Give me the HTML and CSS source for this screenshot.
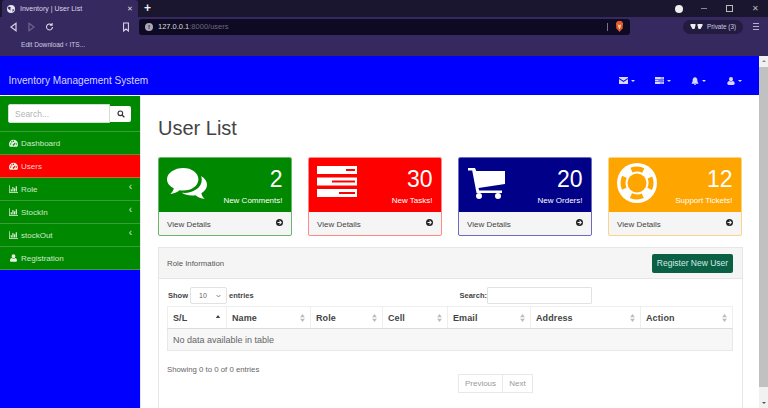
FILE: index.html
```html
<!DOCTYPE html>
<html lang="en">
<head>
<meta charset="utf-8">
<title>Inventory | User List</title>
<link rel="stylesheet" href="styles.css">
</head>
<body>
<svg class="defs" width="0" height="0" aria-hidden="true">
  <symbol id="i-dash" viewBox="0 0 16 14"><path d="M8 1a8 8 0 0 0-8 8c0 1.700.5 3.200 1.400 4.500h13.200A8 8 0 0 0 16 9a8 8 0 0 0-8-8zM3 10a1.200 1.200 0 1 1 0-2.400A1.200 1.200 0 0 1 3 10zm1.800-3.800a1.200 1.200 0 1 1 0-2.400 1.200 1.200 0 0 1 0 2.400zM8 5a1.200 1.200 0 1 1 0-2.400A1.200 1.200 0 0 1 8 5zm1 6.500a1.500 1.500 0 0 1-2.300-1.800L11 6.300l.5.500zM13 10a1.200 1.200 0 1 1 0-2.400 1.200 1.200 0 0 1 0 2.400z"/></symbol>
  <symbol id="i-bars" viewBox="0 0 16 13"><path d="M0 0h1.200v11.800H16V13H0zM3 7h2v4H3zM6 3h2v8H6zM9 5h2v6H9zM12 1.500h2V11h-2z"/></symbol>
  <symbol id="i-user" viewBox="0 0 12 13"><path d="M6 0a3.300 3.300 0 0 1 3.200 3.600C9.200 5.500 7.800 7 6 7S2.800 5.500 2.800 3.600A3.300 3.300 0 0 1 6 0zM3.200 6.500C4 7.300 5 7.700 6 7.700s2-.4 2.800-1.200c1.800.2 3.200 1.600 3.200 4.200 0 1.400-1 2.300-2.200 2.300H2.200C1 13 0 12.100 0 10.700 0 8.100 1.400 6.700 3.200 6.500z"/></symbol>
  <symbol id="i-arrow" viewBox="0 0 14 14"><path fill-rule="evenodd" d="M7 0a7 7 0 1 1 0 14A7 7 0 0 1 7 0zm.6 2.700L6.300 4 8.200 5.800H3v2.400h5.200L6.300 10l1.300 1.300L11.900 7z"/></symbol>
  <symbol id="i-sort" viewBox="0 0 6 10"><path d="M3 0l3 4H0zM3 10L0 6h6z"/></symbol>
</svg>

<header class="browser">
  <div class="tabstrip">
    <div class="tab">
      <svg class="tab-globe" viewBox="0 0 10 10"><circle cx="5" cy="5" r="5" fill="#e8e6f0"/><path d="M2 2l3 1-1 2 1 2-2-1-2-2zM7 5l2 1-2 3z" fill="#3a2d66"/></svg>
      <span class="tab-title">Inventory | User List</span>
      <span class="tab-close">✕</span>
    </div>
    <span class="tab-new">+</span>
    <div class="window-controls">
      <span class="wc-dot"></span>
      <span class="wc-min"></span>
      <span class="wc-max"></span>
      <span class="wc-x">✕</span>
    </div>
  </div>
  <div class="toolbar">
    <svg class="tb-icon" viewBox="0 0 10 12"><path d="M8 1.500v9L2 6z" fill="none" stroke="#cfcbe0" stroke-width="1.500"/></svg>
    <svg class="tb-icon tb-off" viewBox="0 0 10 12"><path d="M2 1.500v9L8 6z" fill="none" stroke="#6b6290" stroke-width="1.500"/></svg>
    <svg class="tb-icon" viewBox="0 0 12 12"><path d="M10 6a4 4 0 1 1-1.300-3M9.500 .5V3.500H6.500" fill="none" stroke="#dedbea" stroke-width="1.400"/></svg>
    <svg class="tb-book" viewBox="0 0 10 12"><path d="M2 1h6v10L5 8.500 2 11z" fill="none" stroke="#dedbea" stroke-width="1.300"/></svg>
    <div class="addressbar">
      <span class="info-dot">!</span>
      <span class="url-host">127.0.0.1</span><span class="url-rest">:8000/users</span>
      <span class="addr-sep"></span>
      <svg class="brave" viewBox="0 0 10 12"><path d="M1 2l2-2h4l2 2-.5 6L5 12 1.500 8z" fill="#e0592a"/><path d="M3 3.500l2 1 2-1-1 4-1 1.500-1-1.500z" fill="#f6c9a8"/></svg>
    </div>
    <div class="private">
      <svg class="glasses" viewBox="0 0 12 5"><path d="M0 0h5v1.500L4 5H2L0 1.500zM7 0h5v1.500L10 5H8L7 1.500z" fill="#eee"/></svg>
      <span>Private (3)</span>
    </div>
    <span class="hamburger"><i></i><i></i><i></i></span>
  </div>
  <div class="bookmarks"><span>Edit Download ‹ ITS...</span></div>
</header>

<div class="viewport">
  <div class="page">
    <nav class="navbar">
      <span class="brand">Inventory Management System</span>
      <div class="nav-icons">
        <span class="nav-item"><svg class="ni" viewBox="0 0 13 10"><path d="M0 0h13v1.500L6.500 5.500 0 1.500zM0 3l6.500 4L13 3v7H0z"/></svg><b class="caret"></b></span>
        <span class="nav-item"><svg class="ni" viewBox="0 0 13 10"><path fill-rule="evenodd" d="M0 0h13v2.800H0zM8 .9v1h4v-1zM0 3.600h13v2.800H0zM5 4.500v1h7v-1zM0 7.200h13V10H0zM7 8.100v1h5v-1z"/></svg><b class="caret"></b></span>
        <span class="nav-item"><svg class="ni ni-bell" viewBox="0 0 10 12"><path d="M5 0c.5 0 .8.300.8.800C7.700 1.200 8.500 2.700 8.500 4.500c0 2.500.5 3.500 1.500 4.500v1H0V9c1-1 1.500-2 1.500-4.500C1.500 2.700 2.300 1.200 4.200.8 4.200.3 4.500 0 5 0zM3.700 10.500h2.600C6.300 11.400 5.700 12 5 12s-1.300-.6-1.300-1.500z"/></svg><b class="caret"></b></span>
        <span class="nav-item"><svg class="ni ni-bell"><use href="#i-user"/></svg><b class="caret"></b></span>
      </div>
    </nav>

    <div class="layout">
      <aside class="sidebar">
        <div class="side-search">
          <input class="side-input" type="text" placeholder="Search...">
          <button class="side-btn" type="button"><svg viewBox="0 0 12 12" class="mag"><circle cx="5" cy="5" r="3.500" fill="none" stroke="#333" stroke-width="1.700"/><path d="M7.500 7.500l3.500 3.500" stroke="#333" stroke-width="2"/></svg></button>
        </div>
        <ul class="menu">
          <li class="menu-item"><svg class="mi"><use href="#i-dash"/></svg>Dashboard</li>
          <li class="menu-item active"><svg class="mi"><use href="#i-dash"/></svg>Users</li>
          <li class="menu-item"><svg class="mi"><use href="#i-bars"/></svg>Role<span class="chev">‹</span></li>
          <li class="menu-item"><svg class="mi"><use href="#i-bars"/></svg>StockIn<span class="chev">‹</span></li>
          <li class="menu-item"><svg class="mi"><use href="#i-bars"/></svg>stockOut<span class="chev">‹</span></li>
          <li class="menu-item"><svg class="mi mi-user"><use href="#i-user"/></svg>Registration</li>
        </ul>
      </aside>

      <main class="content">
        <h1 class="page-title">User List</h1>

        <section class="cards">
          <article class="card card-green">
            <div class="card-top">
              <svg class="card-icon icon-comments" viewBox="0 0 42 34" preserveAspectRatio="none"><path d="M17 0c9 0 16 5.200 16 12s-7 12-16 12c-1.300 0-2.600-.1-3.800-.3C10.500 26 7.300 27.200 3.500 27.500c1.700-1.500 3.200-3.500 3.600-6C2.700 19.400 0 16 0 12 0 5.200 8 0 17 0z"/><path d="M35.300 8.500C39.200 10.400 42 13.800 42 17.800c0 3.700-2.300 6.900-5.900 8.900.4 2.500 1.800 4.400 3.500 6-3.700-.4-7-1.600-9.600-3.800-1.300.2-2.600.3-3.900.3-4 0-7.700-1-10.500-2.800 1 .1 1.900.1 2.400.1 9.800 0 18.500-5.600 18.500-14 0-1.400-.3-2.800-.9-4z"/></svg>
              <div class="card-stat"><div class="card-num">2</div><div class="card-label">New Comments!</div></div>
            </div>
            <div class="card-foot"><span>View Details</span><svg class="foot-arrow"><use href="#i-arrow"/></svg></div>
          </article>
          <article class="card card-red">
            <div class="card-top">
              <svg class="card-icon icon-tasks" viewBox="0 0 40 31" fill-rule="evenodd"><path d="M0 0h40v8H0zM29 3v2h9V3zM0 11.500h40v8H0zM15 14.500v2h23v-2zM0 23h40v8H0zM22 26v2h16v-2z"/></svg>
              <div class="card-stat"><div class="card-num">30</div><div class="card-label">New Tasks!</div></div>
            </div>
            <div class="card-foot"><span>View Details</span><svg class="foot-arrow"><use href="#i-arrow"/></svg></div>
          </article>
          <article class="card card-navy">
            <div class="card-top">
              <svg class="card-icon icon-cart" viewBox="0 0 37 31"><path d="M0 0h7l1.300 3H37v13L10.500 20l.7 2.500H34V25H8.500L4.200 2.500H0z"/><circle cx="11" cy="28" r="3"/><circle cx="30" cy="28" r="3"/></svg>
              <div class="card-stat"><div class="card-num">20</div><div class="card-label">New Orders!</div></div>
            </div>
            <div class="card-foot"><span>View Details</span><svg class="foot-arrow"><use href="#i-arrow"/></svg></div>
          </article>
          <article class="card card-orange">
            <div class="card-top">
              <svg class="card-icon icon-ring" viewBox="0 0 40 40"><circle cx="20" cy="20" r="20"/><circle class="ring-cut" cx="20" cy="20" r="9.500"/><circle class="ring-slots" cx="20" cy="20" r="14"/></svg>
              <div class="card-stat"><div class="card-num">12</div><div class="card-label">Support Tickets!</div></div>
            </div>
            <div class="card-foot"><span>View Details</span><svg class="foot-arrow"><use href="#i-arrow"/></svg></div>
          </article>
        </section>

        <section class="panel">
          <div class="panel-head">
            <span class="panel-title">Role Information</span>
            <button class="btn-register" type="button">Register New User</button>
          </div>
          <div class="panel-body">
            <div class="dt-controls">
              <label class="dt-length">Show <span class="dt-select">10<svg viewBox="0 0 8 5" class="sel-chev"><path d="M1 1l3 3 3-3" fill="none" stroke="#555" stroke-width="1.200"/></svg></span> entries</label>
              <label class="dt-search">Search:<input class="dt-input" type="text"></label>
            </div>
            <table class="dt">
              <thead>
                <tr>
                  <th class="c-sl">S/L<svg class="sort sort-asc" viewBox="0 0 6 4"><path d="M3 0l3 4H0z"/></svg></th>
                  <th class="c-name">Name<svg class="sort"><use href="#i-sort"/></svg></th>
                  <th class="c-role">Role<svg class="sort"><use href="#i-sort"/></svg></th>
                  <th class="c-cell">Cell<svg class="sort"><use href="#i-sort"/></svg></th>
                  <th class="c-email">Email<svg class="sort"><use href="#i-sort"/></svg></th>
                  <th class="c-addr">Address<svg class="sort"><use href="#i-sort"/></svg></th>
                  <th class="c-act">Action<svg class="sort"><use href="#i-sort"/></svg></th>
                </tr>
              </thead>
              <tbody>
                <tr><td colspan="7">No data available in table</td></tr>
              </tbody>
            </table>
            <div class="dt-info">Showing 0 to 0 of 0 entries</div>
            <div class="dt-pager"><span class="pg pg-prev">Previous</span><span class="pg pg-next">Next</span></div>
          </div>
        </section>
      </main>
    </div>
  </div>
  <div class="scrollbar">
    <span class="sb-up"></span>
    <span class="sb-thumb"></span>
    <span class="sb-down"></span>
  </div>
</div>
</body>
</html>
```

FILE: styles.css
```css
* { box-sizing: border-box; }
html, body { margin: 0; padding: 0; height: 408px; overflow: hidden; }
body { font-family: "Liberation Sans", Arial, sans-serif; color: #333; background: #fff; display: flex; flex-direction: column; }
.defs { position: absolute; }

/* browser chrome */
.browser { height: 56px; flex: none; background: #35295f; color: #ddd; display: flex; flex-direction: column; }
.tabstrip { height: 17px; background: #1b1630; display: flex; align-items: center; }
.tab { width: 136px; height: 17px; background: #35295f; margin-left: 2px; padding: 0 5px; display: flex; align-items: center; gap: 5px; border-radius: 3px 3px 0 0; }
.tab-globe { width: 8px; height: 8px; flex: none; }
.tab-title { font-size: 7px; color: #dcd9ea; flex: 1; white-space: nowrap; }
.tab-close { font-size: 7px; color: #ddd; }
.tab-new { color: #eee; font-size: 12px; font-weight: bold; margin-left: 6px; line-height: 17px; }
.window-controls { margin-left: auto; display: flex; align-items: center; padding-right: 9px; }
.wc-dot { width: 8px; height: 8px; border-radius: 50%; background: #eee; margin-right: 18px; }
.wc-min { width: 6px; height: 1px; background: #8a86a0; margin-right: 19px; }
.wc-max { width: 7px; height: 7px; border: 1px solid #bbb; margin-right: 19px; }
.wc-x { font-size: 8px; color: #bbb; line-height: 8px; }
.toolbar { height: 19px; display: flex; align-items: center; padding-left: 9px; }
.tb-icon { width: 9px; height: 10px; margin-right: 9px; flex: none; }
.tb-book { width: 8px; height: 10px; margin-left: 59px; flex: none; }
.addressbar { width: 491px; height: 16px; margin-left: 9px; background: #0e0a24; border-radius: 3px; display: flex; align-items: center; padding: 0 6px; font-size: 7.500px; white-space: nowrap; }
.info-dot { width: 8px; height: 8px; border-radius: 50%; background: #aaa7b8; color: #0e0a24; font-size: 6px; line-height: 8px; text-align: center; margin-right: 5px; font-weight: bold; }
.url-host { color: #ddd; }
.url-rest { color: #6c6880; }
.addr-sep { width: 1px; height: 8px; background: #77738a; margin-left: auto; margin-right: 7px; }
.brave { width: 9px; height: 11px; }
.private { margin-left: 53px; width: 60px; height: 14px; border-radius: 7px; background: #231b40; display: flex; align-items: center; gap: 4px; padding-left: 7px; font-size: 6.300px; color: #cfcbe0; white-space: nowrap; }
.glasses { width: 13px; height: 5px; flex: none; }
.hamburger { margin-left: 10px; width: 6px; display: flex; flex-direction: column; gap: 1.500px; }
.hamburger i { display: block; height: 1.500px; background: #b5b2c4; }
.bookmarks { height: 19px; padding: 5px 0 0 21px; font-size: 6.600px; color: #cfcbe0; white-space: nowrap; }

/* page */
.viewport { flex: 1; min-height: 0; display: flex; }
.page { flex: 1; min-width: 0; display: flex; flex-direction: column; }
.navbar { height: 39px; flex: none; background: #00f; display: flex; align-items: center; padding: 10px 15px 0 8.500px; }
.brand { color: #d6d6ff; font-size: 10.100px; }
.nav-icons { margin-left: auto; display: flex; align-items: center; gap: 19px; }
.nav-item { display: flex; align-items: center; gap: 3px; width: 17px; }
.ni { width: 9px; height: 7px; fill: #d8d8ff; flex: none; }
.ni-bell { width: 8px; height: 8px; }
.caret { width: 0; height: 0; border-left: 2.500px solid transparent; border-right: 2.500px solid transparent; border-top: 2.500px solid #d8d8ff; }
.layout { flex: 1; min-height: 0; display: flex; border-top: 1px solid #fff; }

/* sidebar */
.sidebar { width: 141px; flex: none; background: #00f; border-right: 1px solid #e7e7e7; display: flex; flex-direction: column; }
.side-search { background: #080; height: 36px; padding: 8px 8px 0; display: flex; border-bottom: 1px solid #3c9c3c; align-items: flex-start; }
.side-input { width: 102px; height: 19px; border: 1px solid #d0e0d0; border-radius: 2px 0 0 2px; background: #fff; font: 8.500px "Liberation Sans", Arial, sans-serif; padding: 0 6px; outline: 0; }
.side-input::placeholder { color: #b5b5b5; }
.side-btn { width: 21px; height: 16px; margin-top: 2px; border: 0; background: #fff; border-radius: 0 2px 2px 0; padding: 0; display: flex; align-items: center; justify-content: center; }
.mag { width: 8px; height: 8px; }
.menu { list-style: none; margin: 0; padding: 0; }
.menu-item { height: 23px; background: #080; border-bottom: 1px solid #3c9c3c; color: #cfe8cf; font-size: 8px; display: flex; align-items: center; padding-left: 9px; position: relative; }
.menu-item.active { background: #f00; color: #ffd0d0; border-bottom-color: #c86a2a; }
.mi { width: 9px; height: 8px; margin-right: 3px; fill: #e6f3e6; flex: none; }
.mi-user { width: 7px; height: 8px; margin-left: 1px; margin-right: 4px; }
.chev { position: absolute; right: 8px; top: 3px; font-size: 10px; color: #dfeedd; }

/* content */
.content { flex: 1; min-width: 0; padding: 22px 16px 0 17px; overflow: hidden; }
.page-title { margin: 0 0 19px; font-size: 20px; line-height: 20px; font-weight: normal; color: #444; }
.cards { display: grid; grid-template-columns: repeat(4, 133.500px); column-gap: 16.500px; margin-bottom: 11px; }
.card { height: 79px; border: 1px solid; border-radius: 2px; background: #f5f5f5; overflow: hidden; }
.card-top { height: 54px; padding: 7px 8px 0 8px; display: flex; justify-content: space-between; color: #fff; }
.card-icon { width: 40px; height: 31px; fill: #fff; flex: none; }
.icon-comments { margin-top: 3px; height: 32px; }
.icon-tasks { margin-top: 1px; }
.icon-cart { width: 37px; margin: 3px 0 0 1px; }
.icon-ring { height: 40px; margin-top: -2px; }
.ring-cut { fill: #ffa500; }
.ring-slots { fill: none; stroke: #ffa500; stroke-width: 5; stroke-dasharray: 12.200 9.790; stroke-dashoffset: 6.100; }
.card-stat { text-align: right; }
.card-num { font-size: 23px; line-height: 28px; }
.card-label { font-size: 8px; line-height: 10px; margin-top: 3px; white-space: nowrap; }
.card-foot { height: 24px; padding: 0 8px; display: flex; align-items: center; justify-content: space-between; font-size: 8px; color: #444; }
.foot-arrow { width: 7px; height: 7px; fill: #222; margin-top: -3px; }
.card-green { border-color: #6cb56c; }
.card-green .card-top { background: #080; }
.card-red { border-color: #f88; }
.card-red .card-top { background: #f00; }
.card-navy { border-color: #6b6bc0; }
.card-navy .card-top { background: #008; }
.card-orange { border-color: #fbd48c; }
.card-orange .card-top { background: #ffa500; }

/* panel */
.panel { border: 1px solid #e6e6e6; border-bottom: 0; height: 170px; }
.panel-head { height: 31px; background: #f5f5f5; border-bottom: 1px solid #e6e6e6; display: flex; align-items: center; justify-content: space-between; padding: 0 9px 0 8px; }
.panel-title { font-size: 7.800px; color: #555; }
.btn-register { width: 81px; height: 19px; padding: 0; border: 0; border-radius: 2px; background: #0a6045; color: #d4ebe3; font: 8.500px "Liberation Sans", Arial, sans-serif; }
.panel-body { padding: 8px 9px 0 8px; }
.dt-controls { height: 17px; display: flex; align-items: center; font-size: 7.500px; font-weight: bold; color: #444; margin-bottom: 2px; }
.dt-length { display: flex; align-items: center; gap: 2px; padding-left: 1px; }
.dt-select { width: 37px; height: 17px; border: 1px solid #e2e2e2; border-radius: 2px; padding: 0 5px 0 8px; display: flex; align-items: center; justify-content: space-between; font-weight: normal; font-size: 7px; color: #666; }
.sel-chev { width: 5px; height: 4px; }
.dt-search { margin-left: auto; display: flex; align-items: center; margin-right: 141px; }
.dt-input { width: 105px; height: 17px; border: 1px solid #e2e2e2; border-radius: 1px; background: #fff; padding: 0; margin-left: 0; outline: 0; }
.dt { width: 565px; border-collapse: collapse; table-layout: fixed; font-size: 9px; }
.dt th { height: 22px; padding: 0 5px; text-align: left; font-weight: bold; color: #444; border: 1px solid #eee; border-bottom: 1px solid #ddd; position: relative; letter-spacing: .1px; }
.dt td { height: 22px; padding: 0 5px; background: #f7f7f7; border: 1px solid #e8e8e8; color: #666; }
.c-sl { width: 59px; }
.c-name { width: 84px; }
.c-role { width: 72px; }
.c-cell { width: 65px; }
.c-email { width: 83px; }
.c-addr { width: 110px; }
.c-act { width: 92px; }
.sort { position: absolute; right: 5px; top: 7px; width: 5px; height: 8px; fill: #bbb; }
.sort-asc { top: 8px; height: 3px; width: 6px; fill: #444; }
.dt-info { margin-top: 14px; font-size: 7.800px; color: #666; line-height: 10px; }
.dt-pager { display: flex; justify-content: flex-end; width: 366px; margin-top: -1px; }
.pg { height: 19px; display: flex; align-items: center; justify-content: center; border: 1px solid #e8e8e8; font-size: 8px; color: #999; }
.pg-prev { width: 45px; }
.pg-next { width: 30px; border-left: 0; }

/* scrollbar */
.scrollbar { width: 9px; flex: none; background: #f1f1f1; display: flex; flex-direction: column; align-items: center; }
.sb-up { width: 0; height: 0; margin: 4px 0 5px; border-left: 2px solid transparent; border-right: 2px solid transparent; border-bottom: 2px solid #888; }
.sb-thumb { width: 100%; height: 320px; background: #c1c1c1; }
.sb-down { width: 0; height: 0; margin-top: 15px; border-left: 2px solid transparent; border-right: 2px solid transparent; border-top: 2px solid #555; }
```
